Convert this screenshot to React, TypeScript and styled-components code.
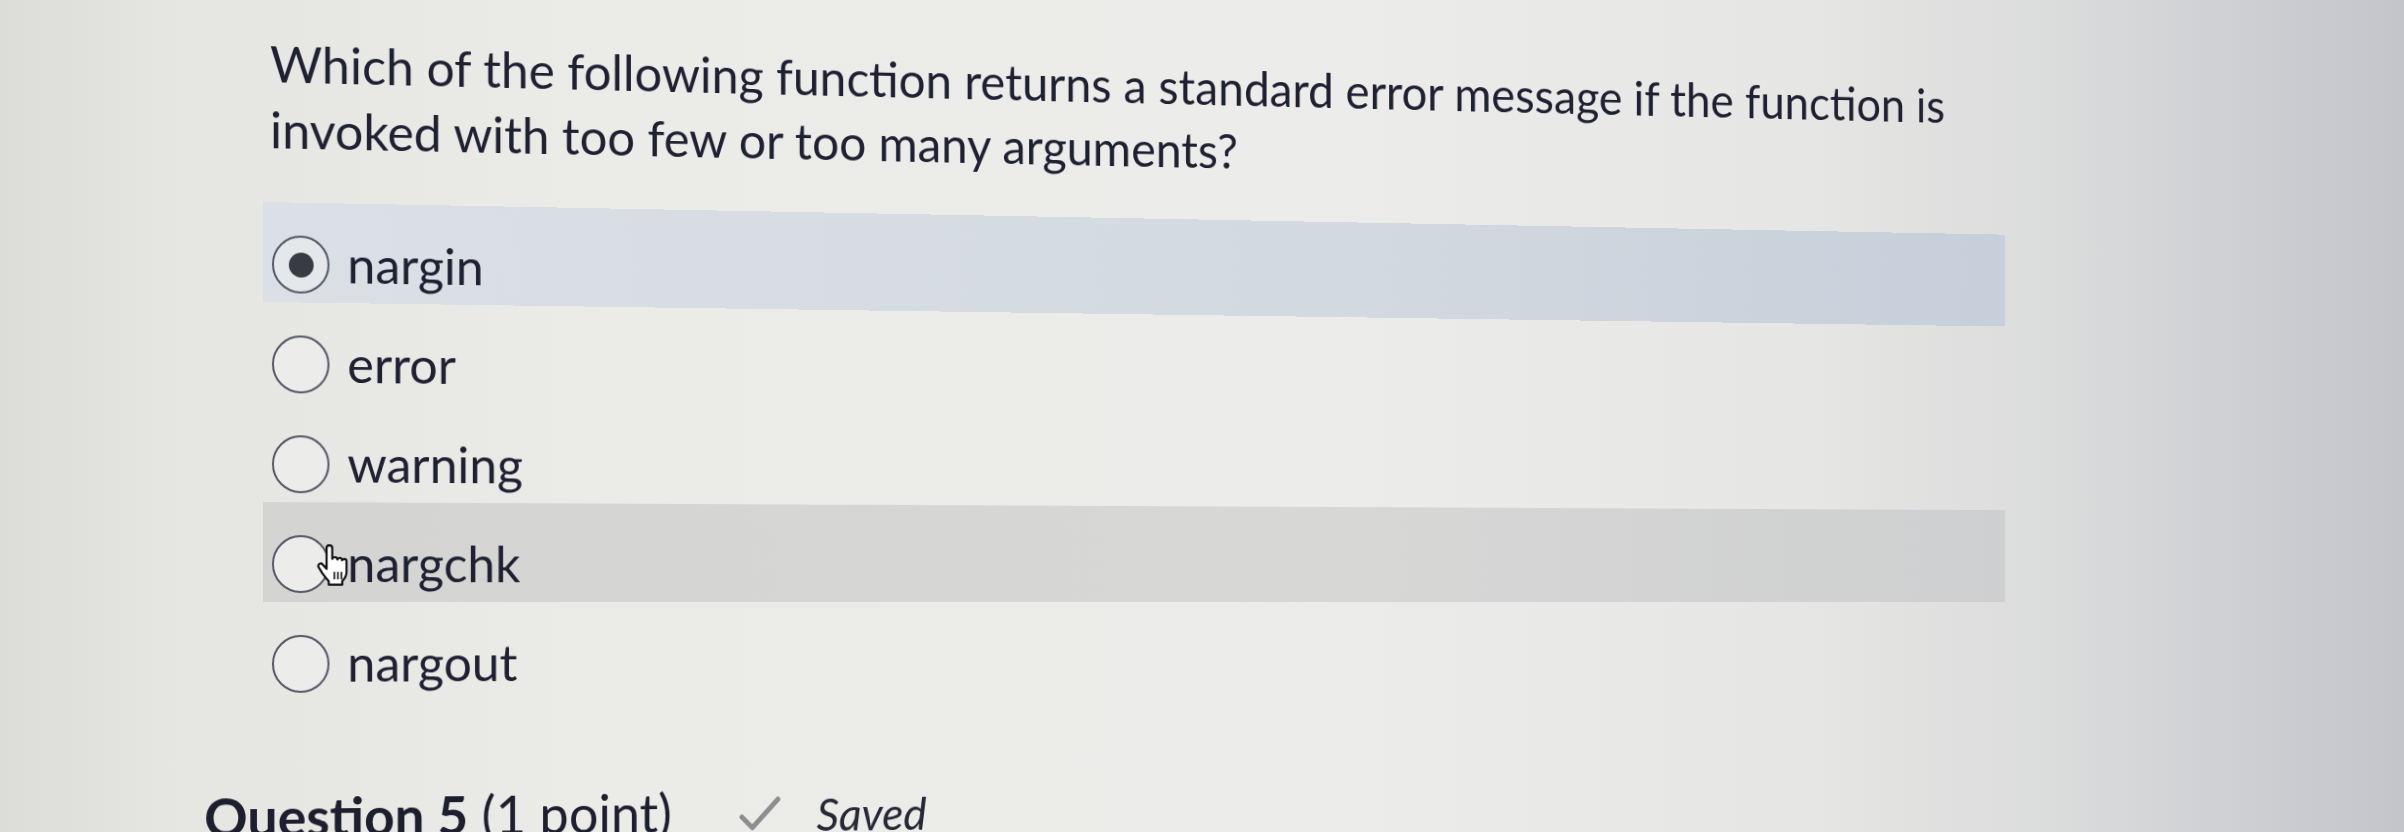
import styled, { createGlobalStyle } from 'styled-components';

const GlobalStyle = createGlobalStyle`
  html, body {
    margin: 0;
    padding: 0;
  }
  body {
    font-family: Lato, 'Noto Sans', sans-serif;
    color: #1f2133;
  }
`;

const options = ['nargin', 'error', 'warning', 'nargchk', 'nargout'];

export default function App() {
  const selected = 'nargin';
  const hovered = 'nargchk';

  return (
    <>
      <GlobalStyle />
      <Page>
        {/* the photo is taken at an angle: right side recedes */}
        <Sheet>
          <QuestionBlock>
            <Prompt>
              Which of the following function returns a standard error message
              if the function is invoked with too few or too many arguments?
            </Prompt>
            <OptionList>
              {options.map((opt) => (
                <Option
                  key={opt}
                  $selected={opt === selected}
                  $hovered={opt === hovered}
                >
                  <Radio $checked={opt === selected} />
                  <Label>{opt}</Label>
                  {opt === hovered ? <HandCursor /> : null}
                </Option>
              ))}
            </OptionList>
          </QuestionBlock>
          <NextHeader>
            <HeaderTitle>
              <strong>Question 5</strong> (1 point)
            </HeaderTitle>
            <SavedTag>
              <svg width="44" height="36" viewBox="0 0 44 36">
                <path
                  d="M3 21 L14 32 L41 3"
                  fill="none"
                  stroke="#8c8e8f"
                  strokeWidth="5"
                  strokeLinecap="round"
                  strokeLinejoin="round"
                />
              </svg>
              <SavedText>Saved</SavedText>
            </SavedTag>
          </NextHeader>
        </Sheet>
      </Page>
    </>
  );
}

function HandCursor() {
  return (
    <Cursor viewBox="0 0 23 30" width="33" height="43">
      <path
        d="M9 1.5c1.2 0 2 .9 2 2V11c.3-.8 1-1.2 1.8-1.2 1 0 1.7.7 1.8 1.6.3-.7 1-1.1 1.7-1.1.9 0 1.6.7 1.7 1.6.3-.5.9-.8 1.5-.8.9 0 1.6.7 1.6 1.6V20c0 3-1.5 5-3 6.5V29H8.5v-2.5c-1.5-1.5-3-3.5-4.5-5.5L1.5 17c-.6-.8-.4-1.9.4-2.4.8-.5 1.8-.3 2.4.4L7 18V3.5c0-1.1.9-2 2-2z"
        fill="#fff"
        stroke="#111"
        strokeWidth="1.5"
        strokeLinejoin="round"
      />
      <path
        d="M12.5 20.5v4.5M15 20.5v4.5M17.5 20.5v4.5"
        stroke="#111"
        strokeWidth="1.1"
        strokeLinecap="round"
      />
    </Cursor>
  );
}

const Page = styled.div`
  width: 2404px;
  height: 832px;
  overflow: hidden;
  background: linear-gradient(
    90deg,
    #dcdcd8 0%,
    #e5e5e1 7%,
    #ebebe8 25%,
    #ececea 55%,
    #e6e6e4 75%,
    #dadbdb 86%,
    #cdced2 94%,
    #c4c5ca 100%
  );
`;

const Sheet = styled.div`
  padding-left: 204px;
  transform-origin: 263px 602px;
  transform: perspective(2000px) rotateY(5.35deg);
`;

const QuestionBlock = styled.div`
  margin-left: 59px;
  width: 1905px;
`;

const Prompt = styled.p`
  margin: 0;
  padding: 30px 0 0 7px;
  font-size: 50.8px;
  line-height: 66px;
`;

const OptionList = styled.div`
  margin-top: 40px;
  display: flex;
  flex-direction: column;
`;

const Option = styled.label<{ $selected: boolean; $hovered: boolean }>`
  position: relative;
  box-sizing: border-box;
  height: 100px;
  padding: 24px 0 0 9px;
  display: flex;
  align-items: center;
  background: ${(p) =>
    p.$selected
      ? 'linear-gradient(90deg, #dae0e5, #d2d9e0 60%, #c6cfda)'
      : p.$hovered
        ? 'linear-gradient(90deg, #d4d4d3, #d7d7d6 60%, #cecfd0)'
        : 'transparent'};
`;

const Radio = styled.span<{ $checked: boolean }>`
  box-sizing: border-box;
  width: 58px;
  height: 58px;
  flex: none;
  border-radius: 50%;
  border: 2.5px solid #565968;
  background: ${(p) => (p.$checked ? '#e4e8ea' : '#ececea')};
  display: flex;
  align-items: center;
  justify-content: center;
  &::after {
    content: '';
    display: ${(p) => (p.$checked ? 'block' : 'none')};
    width: 25px;
    height: 25px;
    border-radius: 50%;
    background: #383b42;
  }
`;

const Label = styled.span`
  margin-left: 18px;
  font-size: 51px;
  line-height: 1;
  padding-bottom: 4px;
`;

const Cursor = styled.svg`
  position: absolute;
  left: 54px;
  top: 41px;
`;

const NextHeader = styled.div`
  margin-top: 83px;
  display: flex;
  align-items: baseline;
  gap: 70px;
`;

const HeaderTitle = styled.h2`
  margin: 0;
  font-size: 54px;
  font-weight: 400;
  line-height: 1.2;
  color: #1d1f2e;
  strong {
    font-weight: 700;
  }
`;

const SavedTag = styled.div`
  display: flex;
  align-items: center;
  gap: 38px;
`;

const SavedText = styled.span`
  font-size: 47px;
  font-style: italic;
  color: #262836;
`;
